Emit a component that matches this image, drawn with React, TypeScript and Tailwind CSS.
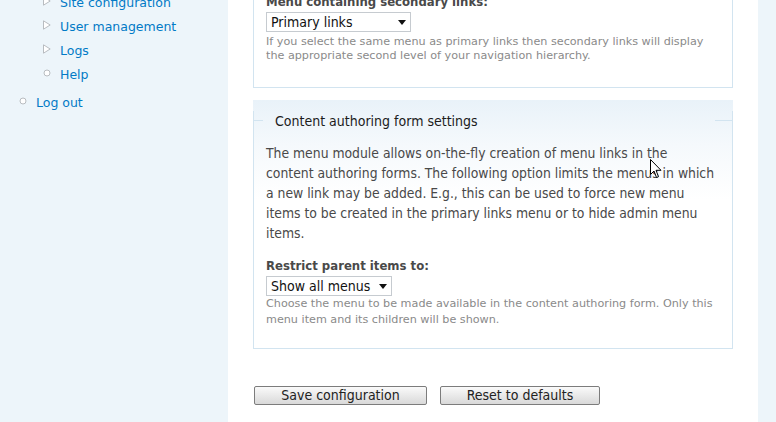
import type { ReactNode } from "react";

const sans = "font-['DejaVu_Sans',sans-serif] font-stretch-normal";
const cond = "font-['DejaVu_Sans_Condensed','DejaVu_Sans',sans-serif] font-stretch-condensed";

function Triangle() {
  return (
    <svg width="8" height="10" viewBox="0 0 8 10" className="shrink-0">
      <path d="M0.5 0.8 L7.2 5 L0.5 9.2 Z" fill="#fff" stroke="#b8bcc0" strokeWidth="1" />
    </svg>
  );
}

function Circle() {
  return (
    <svg width="8" height="8" viewBox="0 0 8 8" className="shrink-0">
      <circle cx="4" cy="4" r="3" fill="#fff" stroke="#b8bcc0" strokeWidth="1" />
    </svg>
  );
}

function NavItem({ icon, label, indent }: { icon: ReactNode; label: string; indent?: boolean }) {
  return (
    <li className={`flex h-6 items-center ${indent ? "pl-[43px]" : "pl-[19px] mt-1"}`}>
      <span className="flex w-[17px] items-center -mt-1">{icon}</span>
      <a className="text-[12.5px] leading-6 text-[#027ac6]">{label}</a>
    </li>
  );
}

function Select({ label, width }: { label: string; width: string }) {
  return (
    <div
      className={`${width} flex h-[20px] items-center justify-between border border-[#c6cbd0] bg-white pl-[4px] pr-[4px] text-[14px] text-[#111]`}
    >
      <span>{label}</span>
      <svg width="8" height="5" viewBox="0 0 8 5">
        <path d="M0 0 H8 L4 5 Z" fill="#111" />
      </svg>
    </div>
  );
}

function Button({ label, width }: { label: string; width: string }) {
  return (
    <button
      className={`${width} h-[19px] rounded-[2px] border border-[#7c7c7c] bg-gradient-to-b from-[#fafafa] to-[#d9d9d9] text-[14px] leading-[17px] text-[#222]`}
    >
      {label}
    </button>
  );
}

function Lines({ lines, className }: { lines: string[]; className: string }) {
  return (
    <p className={`whitespace-nowrap ${className}`}>
      {lines.map((line) => (
        <span key={line} className="block">
          {line}
        </span>
      ))}
    </p>
  );
}

export default function App() {
  return (
    <div className={`flex h-[422px] w-[776px] overflow-hidden bg-white ${cond}`}>
      {/* left sidebar */}
      <aside className="w-[228px] shrink-0 bg-[#edf5fa]">
        <ul className={`-mt-[9px] ${sans}`}>
          <NavItem indent icon={<Triangle />} label="Site configuration" />
          <NavItem indent icon={<Triangle />} label="User management" />
          <NavItem indent icon={<Triangle />} label="Logs" />
          <NavItem indent icon={<Circle />} label="Help" />
          <NavItem icon={<Circle />} label="Log out" />
        </ul>
      </aside>

      {/* main */}
      <main className="relative w-[530px] shrink-0 px-[25px] text-[#494949]">
        {/* first fieldset, scrolled partly out of view */}
        <div className="-mt-[8px] border-x border-b border-[#d2e4f0] px-[12px] pb-[24px]">
          <label className="block text-[13px] font-bold leading-5">Menu containing secondary links:</label>
          <Select label="Primary links" width="w-[145px]" />
          <Lines
            className={`mt-[3px] text-[11.2px] leading-[14px] text-[#8a8a8a] ${sans}`}
            lines={[
              "If you select the same menu as primary links then secondary links will display",
              "the appropriate second level of your navigation hierarchy.",
            ]}
          />
        </div>

        {/* second fieldset */}
        <div className="mt-[12px] bg-gradient-to-b from-[#e9f2f9] via-[#f5f9fc] via-[18%] to-white to-[40%]">
          <div className="h-[11px]" />
          <div className="flex h-5 items-center">
            <div className="h-5 w-[10px] shrink-0 border-l border-[#d2e4f0] pt-[9px]">
              <div className="h-px bg-[#d2e4f0]" />
            </div>
            <span className="px-[12px] text-[14px] leading-5 text-[#1c1c1c]">Content authoring form settings</span>
            <div className="flex-1" />
            <div className="h-5 w-[18px] shrink-0 border-r border-[#d2e4f0] pt-[9px]">
              <div className="h-px bg-[#d2e4f0]" />
            </div>
          </div>
          <div className="border-x border-b border-[#d2e4f0] px-[12px] pb-[20px] pt-[12px]">
            <Lines
              className="text-[13.8px] leading-5"
              lines={[
                "The menu module allows on-the-fly creation of menu links in the",
                "content authoring forms. The following option limits the menus in which",
                "a new link may be added. E.g., this can be used to force new menu",
                "items to be created in the primary links menu or to hide admin menu",
                "items.",
              ]}
            />
            <label className="mt-[13px] block text-[13px] font-bold leading-5">Restrict parent items to:</label>
            <Select label="Show all menus" width="w-[126px]" />
            <Lines
              className={`text-[11.2px] leading-4 text-[#8a8a8a] ${sans}`}
              lines={[
                "Choose the menu to be made available in the content authoring form. Only this",
                "menu item and its children will be shown.",
              ]}
            />
          </div>
        </div>

        <div className="mt-[37px] flex gap-[13px] px-px">
          <Button label="Save configuration" width="w-[173px]" />
          <Button label="Reset to defaults" width="w-[160px]" />
        </div>

        {/* mouse pointer */}
        <svg className="absolute left-[422px] top-[159px]" width="12" height="20" viewBox="0 0 12 20">
          <path
            d="M0.5 0.5 L0.5 15.5 L4 12 L6.5 18.5 L8.5 17.7 L6 11.3 L11 11.3 Z"
            fill="#fff"
            stroke="#000"
            strokeWidth="1"
            strokeLinejoin="round"
          />
        </svg>
      </main>

      {/* right sidebar */}
      <aside className="flex-1 bg-[#edf5fa]" />
    </div>
  );
}
